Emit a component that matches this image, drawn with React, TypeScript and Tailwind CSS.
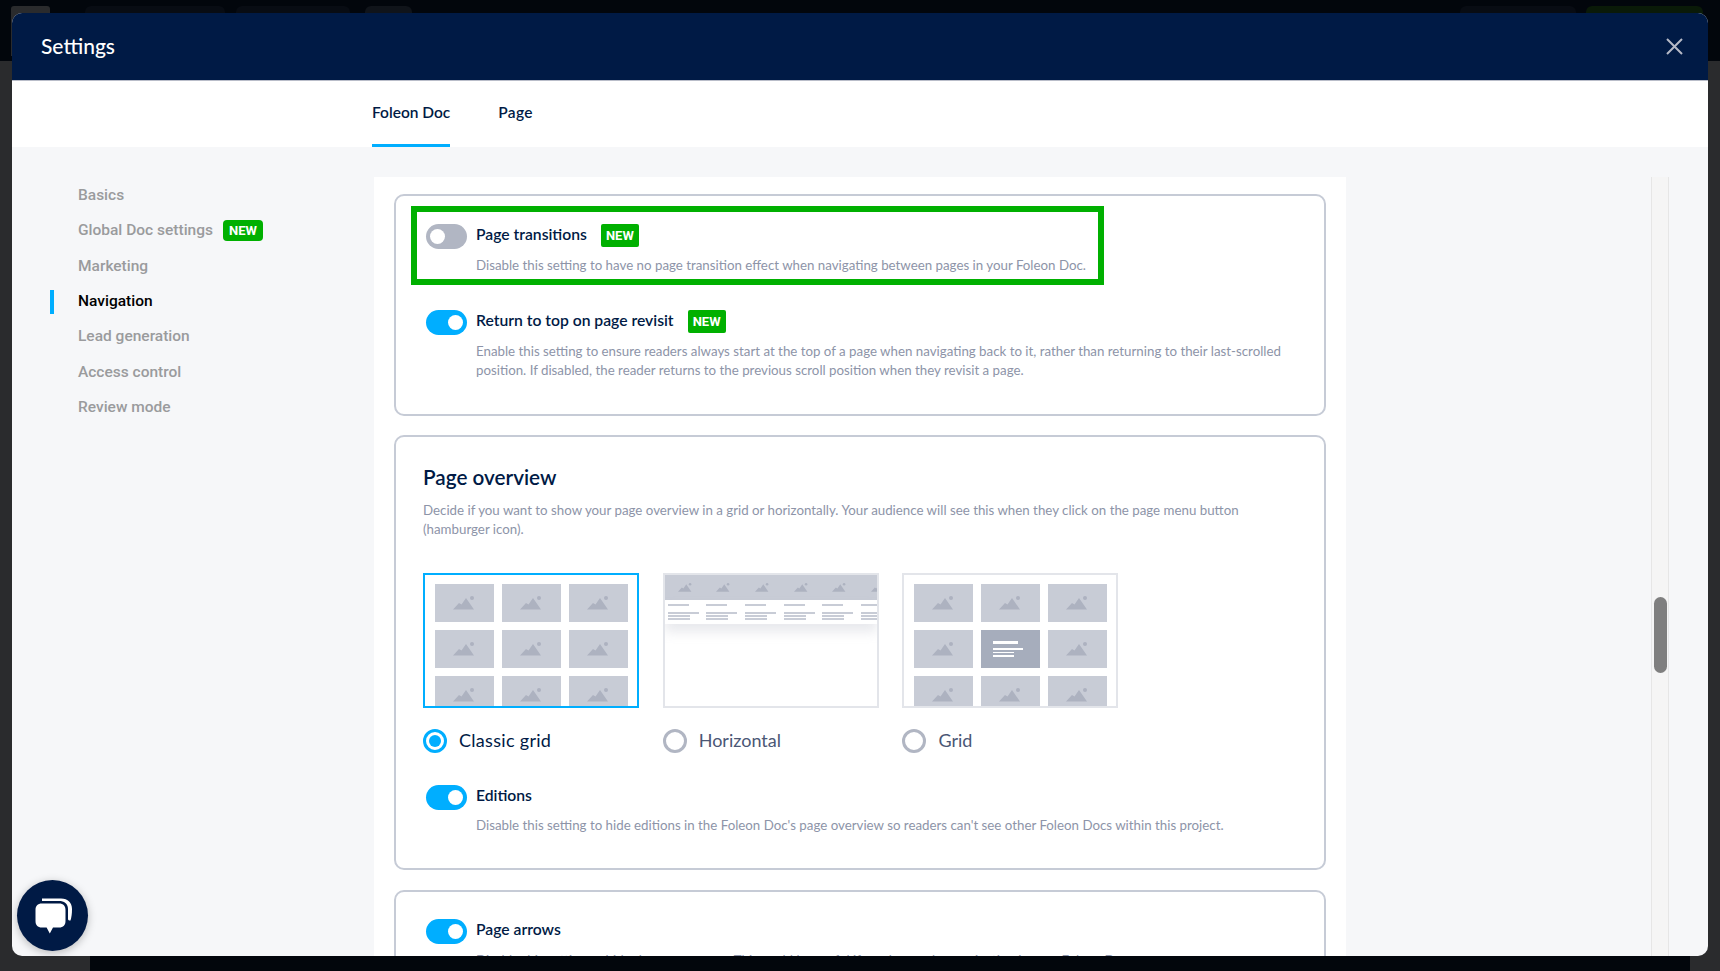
const Toggle = ({ on = true }: { on?: boolean }) => (
  <div className={`flex h-[25px] w-[41px] shrink-0 items-center rounded-full px-[4px] ${on ? "justify-end bg-[#00aeff]" : "justify-start bg-[#b1b6c3]"}`}>
    <div className="size-[15px] rounded-full bg-white" />
  </div>
);

const Badge = ({ rounded = false }: { rounded?: boolean }) => (
  <span className={`flex items-center justify-center bg-[#00b000] font-['Roboto',sans-serif] text-[13px] font-bold text-white ${rounded ? "h-[21px] w-[40px] rounded-[4px]" : "h-[23px] w-[38px] rounded-[2px]"}`}>NEW</span>
);

const Setting = ({ title, badge, on = true, tight = false, children }: { title: string; badge?: boolean; on?: boolean; tight?: boolean; children: React.ReactNode }) => (
  <div>
    <div className="flex h-[25px] items-center">
      <Toggle on={on} />
      <span className="mb-[3px] ml-[9px] text-[15.7px] font-semibold text-[#001a45]">{title}</span>
      {badge && <span className="mb-[2px] ml-[14px]"><Badge /></span>}
    </div>
    <div className={`pl-[50px] text-[13.3px] leading-[19px] text-[#8d94a8] ${tight ? "mt-[6px]" : "mt-[7px]"}`}>{children}</div>
  </div>
);

const Mountain = ({ small = false }: { small?: boolean }) => (
  <svg viewBox="0 0 22 14" className={`shrink-0 ${small ? "h-[9px] w-[14px]" : "h-[14px] w-[22px]"}`}>
    <path d="M0 13.5 L6 7 L8.5 8.5 L13 2 L21 13.5 Z" fill="#adb2c0" />
    <circle cx="19" cy="2" r="2" fill="#adb2c0" />
  </svg>
);

const Tile = () => (
  <div className="flex h-[38px] w-[59px] items-center justify-center bg-[#c8ccd6]">
    <Mountain />
  </div>
);

const TextTile = () => (
  <div className="flex h-[38px] w-[59px] flex-col justify-center gap-[2px] bg-[#a6adbc] pl-[12px]">
    <div className="mb-[2px] h-[3px] w-[25px] bg-white" />
    <div className="h-[1.5px] w-[30px] bg-white" />
    <div className="h-[1.5px] w-[21px] bg-white" />
    <div className="h-[1.5px] w-[21px] bg-white" />
  </div>
);

const Grid = ({ center = false, active = false }: { center?: boolean; active?: boolean }) => (
  <div className={`h-[135px] w-[216px] overflow-hidden border-2 pt-[9px] ${active ? "border-[#00aeff]" : "border-[#e3e5ea]"}`}>
    <div className="grid grid-cols-[59px_59px_59px] justify-center gap-x-[8px] gap-y-[8px]">
      {Array.from({ length: 9 }).map((_, i) => (center && i === 4 ? <TextTile key={i} /> : <Tile key={i} />))}
    </div>
  </div>
);

const Horizontal = () => (
  <div className="h-[135px] w-[216px] overflow-hidden border-2 border-[#e3e5ea]">
    <div className="flex h-[25px] items-center gap-[24.7px] overflow-hidden bg-[#c8ccd6] pl-[13px]">
      {Array.from({ length: 6 }).map((_, i) => (
        <Mountain key={i} small />
      ))}
    </div>
    <div className="flex h-[24px] gap-[7.2px] overflow-hidden bg-white pl-[3px] pt-[4px] shadow-[0_8px_12px_rgba(150,155,175,0.22)]">
      {Array.from({ length: 6 }).map((_, i) => (
        <div key={i} className="flex w-[31.5px] shrink-0 flex-col gap-[1.5px]">
          <div className="mb-[5px] h-[1.5px] w-[21px] bg-[#c8ccd6]" />
          <div className="h-[1.5px] w-[31px] bg-[#c8ccd6]" />
          <div className="h-[1.5px] w-[22px] bg-[#c8ccd6]" />
          <div className="h-[1.5px] w-[22px] bg-[#c8ccd6]" />
        </div>
      ))}
    </div>
  </div>
);

const Radio = ({ label, on = false }: { label: string; on?: boolean }) => (
  <div className="mt-[21px] flex h-[24px] items-center">
    <div className={`flex size-[24px] items-center justify-center rounded-full border-[3px] ${on ? "border-[#00aeff]" : "border-[#b1b6c3]"}`}>
      {on && <div className="size-[12px] rounded-full bg-[#00aeff]" />}
    </div>
    <span className={`mb-[1px] ml-[12px] text-[18px] ${on ? "tracking-[0.3px] text-[#001a45]" : "text-[#4b5775]"}`}>{label}</span>
  </div>
);

const Card = ({ className, children }: { className: string; children: React.ReactNode }) => (
  <div className={`relative rounded-[10px] border-2 border-[#c6cbd6] ${className}`}>{children}</div>
);

const NAV = ["Basics", "Global Doc settings", "Marketing", "Navigation", "Lead generation", "Access control", "Review mode"];

export default function App() {
  return (
    <div className="relative flex h-[971px] w-[1720px] flex-col overflow-hidden bg-[#2a2b2d] font-['Lato',sans-serif]">
      {/* dimmed app behind the dialog */}
      <div className="flex h-[61px] items-start bg-[#02060c] pt-[6px]">
        <div className="ml-[11px] h-[50px] w-[39px] rounded-t-[3px] bg-[#2a2b2d]" />
        <div className="ml-[35px] h-[30px] w-[140px] rounded-[6px] bg-[#080c13]" />
        <div className="ml-[11px] h-[30px] w-[114px] rounded-[6px] bg-[#080c13]" />
        <div className="ml-[15px] h-[30px] w-[47px] rounded-[6px] bg-[#10141a]" />
        <div className="ml-auto h-[30px] w-[116px] rounded-[6px] bg-[#080c13]" />
        <div className="ml-[10px] mr-[17px] h-[30px] w-[117px] rounded-[6px] bg-[#0a1a08]" />
      </div>
      <div className="flex-1" />
      <div className="ml-[90px] mr-[30px] h-[15px] bg-[#02060c]" />

      {/* dialog */}
      <div className="absolute left-[12px] top-[13px] flex h-[943px] w-[1696px] flex-col overflow-hidden rounded-[10px] bg-[#f6f7f9]">
        <div className="flex h-[68px] shrink-0 items-center justify-between border-b border-[#b9bdc9] bg-[#001a45] pl-[29px] pr-[25px]">
          <span className="mb-[2px] text-[21px] font-medium text-white">Settings</span>
          <svg width="17" height="17" viewBox="0 0 17 17" fill="none" stroke="#b5b9c6" strokeWidth="2">
            <path d="M1 1 L16 16 M16 1 L1 16" />
          </svg>
        </div>

        <div className="flex h-[66px] shrink-0 items-stretch gap-[48px] bg-white pl-[360px]">
          <div className="flex items-center border-b-[3px] border-[#00aeff] text-[15.5px] font-semibold text-[#001a45]">Foleon Doc</div>
          <div className="flex items-center border-b-[3px] border-transparent text-[15.5px] font-semibold tracking-[0.3px] text-[#001a45]">Page</div>
        </div>

        <div className="flex min-h-0 flex-1 pt-[30px]">
          <nav className="relative w-[362px] shrink-0 pt-[1px] font-['Roboto',sans-serif] text-[15.5px] font-medium text-[#9a9b9d]">
            {NAV.map((n) => (
              <div key={n} className="relative flex h-[35.3px] items-center pl-[66px]">
                {n === "Navigation" && <div className="absolute left-[38px] top-[6px] h-[24px] w-[4px] bg-[#00aeff]" />}
                <span className={n === "Navigation" ? "text-black" : ""}>{n}</span>
                {n.startsWith("Global") && <span className="ml-[10px]"><Badge rounded /></span>}
              </div>
            ))}
          </nav>

          <main className="w-[972px] shrink-0 overflow-hidden bg-white px-[20px] pt-[17px]">
            <Card className="h-[222px] pl-[30px] pr-[40px] pt-[28px]">
              <div className="absolute left-[15px] top-[10px] h-[79px] w-[693px] border-[6px] border-[#00b000]" />
              <Setting title="Page transitions" badge on={false}>
                Disable this setting to have no page transition effect when navigating between pages in your Foleon Doc.
              </Setting>
              <div className="mt-[35px]">
                <Setting title="Return to top on page revisit" badge>
                  Enable this setting to ensure readers always start at the top of a page when navigating back to it, rather than returning to their last-scrolled position. If disabled, the reader returns to the previous scroll position when they revisit a page.
                </Setting>
              </div>
            </Card>

            <Card className="mt-[19px] h-[435px] pl-[27px] pr-[40px] pt-[27px]">
              <h2 className="text-[20.7px] font-semibold leading-[26px] text-[#001a45]">Page overview</h2>
              <p className="mt-[11px] w-[830px] text-[13.3px] leading-[19px] text-[#8d94a8]">
                Decide if you want to show your page overview in a grid or horizontally. Your audience will see this when they click on the page menu button (hamburger icon).
              </p>
              <div className="mt-[34px] flex gap-[23.7px]">
                <div><Grid active /><Radio label="Classic grid" on /></div>
                <div><Horizontal /><Radio label="Horizontal" /></div>
                <div><Grid center /><Radio label="Grid" /></div>
              </div>
              <div className="ml-[3px] mt-[32px]">
                <Setting title="Editions" tight>
                  Disable this setting to hide editions in the Foleon Doc's page overview so readers can't see other Foleon Docs within this project.
                </Setting>
              </div>
            </Card>

            <Card className="mt-[20px] h-[200px] pl-[30px] pt-[27px]">
              <Setting title="Page arrows">
                Disable this setting to hide the page arrows. This could be useful if you have other navigation in your Foleon Doc.
              </Setting>
            </Card>
          </main>

          <div className="ml-[305px] h-full w-[18px] shrink-0 border-x border-[#e6e6e6] bg-[#f5f5f5]">
            <div className="ml-[2px] mt-[420px] h-[76px] w-[13px] rounded-full bg-[#7f7f7f]" />
          </div>
        </div>

        <div className="absolute bottom-[5px] left-[5px] flex size-[71px] items-center justify-center rounded-full bg-[#001a45] shadow-[0_2px_8px_rgba(0,0,0,0.25)]">
          <svg width="40" height="38" viewBox="0 0 40 38">
            <path d="M9 1.5 H28 C35 1.5 39 6 39 12 C39 17 38.5 20 37.5 23.5 C36 23.5 35 23 35 22 V12 C35 6.5 31 4 26 4 H9 Z" fill="#fff" />
            <path d="M9 6.5 H26 C30.5 6.5 32.5 9 32.5 13 V24 C32.5 28 30.5 30.5 26 30.5 H20 L16.8 36.5 L13.6 30.5 H9 C4.5 30.5 2.5 28 2.5 24 V13 C2.5 9 4.5 6.5 9 6.5 Z" fill="#fff" stroke="#001a45" strokeWidth="1.5" paintOrder="stroke" />
          </svg>
        </div>
      </div>
    </div>
  );
}
